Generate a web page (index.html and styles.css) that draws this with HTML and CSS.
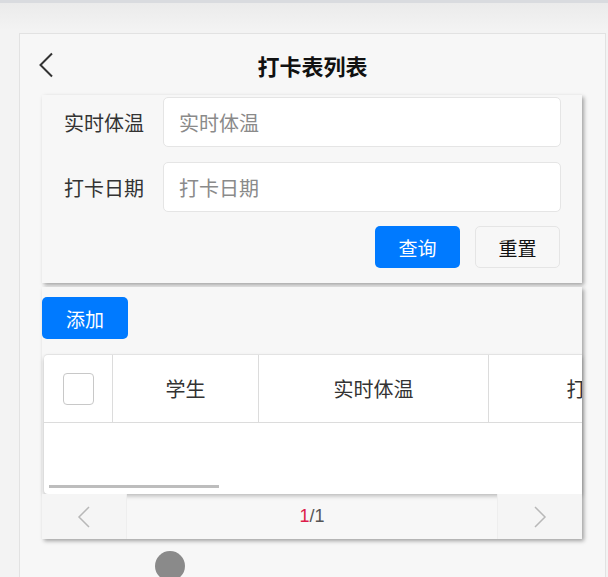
FILE: index.html
```html
<!DOCTYPE html>
<html lang="zh-CN">
<head>
  <meta charset="UTF-8">
  <meta name="viewport" content="width=device-width, initial-scale=1.0">
  <title>打卡表列表</title>
  <link rel="stylesheet" href="styles.css">
</head>
<body>
  <div class="topbar"></div>
  <div class="phone">
    <div class="navbar">
      <span class="back">
        <svg width="16" height="26" viewBox="0 0 16 26"><polyline points="14,1.5 2.5,13 14,24.5" fill="none" stroke="#333" stroke-width="2"/></svg>
      </span>
      <h1 class="title">打卡表列表</h1>
      <span></span>
    </div>

    <div class="content">
      <div class="search-card">
        <div class="form-row">
          <label class="form-label">实时体温</label>
          <input class="form-input" type="text" placeholder="实时体温">
        </div>
        <div class="form-row">
          <label class="form-label">打卡日期</label>
          <input class="form-input" type="text" placeholder="打卡日期">
        </div>
        <div class="form-actions">
          <button class="btn btn-primary">查询</button>
          <button class="btn btn-default">重置</button>
        </div>
      </div>

      <div class="list-card">
        <button class="btn btn-primary btn-add">添加</button>
        <div class="table-wrap">
          <div class="table">
            <div class="thead">
              <div class="th col-check"><span class="checkbox"></span></div>
              <div class="th col-student">学生</div>
              <div class="th col-temp">实时体温</div>
              <div class="th col-date">打卡日期</div>
            </div>
            <div class="tbody"></div>
          </div>
          <div class="scrollbar"></div>
        </div>
        <div class="pager">
          <div class="pager-btn">
            <svg width="14" height="22" viewBox="0 0 14 22"><polyline points="12,1 2,11 12,21" fill="none" stroke="#b8b8b8" stroke-width="1.5"/></svg>
          </div>
          <div class="pager-info"><span class="current">1</span>/1</div>
          <div class="pager-btn">
            <svg width="14" height="22" viewBox="0 0 14 22"><polyline points="2,1 12,11 2,21" fill="none" stroke="#b8b8b8" stroke-width="1.5"/></svg>
          </div>
        </div>
      </div>

      <div class="fab"></div>
    </div>
  </div>
</body>
</html>
```

FILE: styles.css
```css
* {
  box-sizing: border-box;
}
body {
  margin: 0;
  height: 577px;
  overflow: hidden;
  background: linear-gradient(#eaeaea, #f3f3f3 30px);
  font-family: "Noto Sans CJK SC", "Noto Sans", sans-serif;
  color: #333;
}
.topbar {
  height: 3px;
  background: #d9dbdf;
}
.phone {
  margin: 30px 0 0 19px;
  width: 587px;
  height: 544px;
  overflow: hidden;
  background: #f7f7f7;
  border: 1px solid #e2e2e2;
  border-bottom: none;
}
.navbar {
  height: 61px;
  display: grid;
  grid-template-columns: 1fr auto 1fr;
  align-items: center;
}
.back {
  padding-left: 18px;
  display: flex;
  align-items: center;
}
.title {
  margin: 0;
  font-size: 22px;
  font-weight: bold;
  color: #111;
}
.content {
  padding: 0 22px;
}
.search-card {
  width: 540px;
  padding: 2px 21px 15px 22px;
  background: #f7f7f7;
  box-shadow: 2px 2px 4px rgba(0, 0, 0, 0.35);
}
.form-row {
  display: flex;
  align-items: center;
  margin-bottom: 15px;
}
.form-label {
  width: 99px;
  font-size: 20px;
  color: #333;
}
.form-input {
  flex: 1;
  height: 50px;
  padding: 0 15px;
  border: 1px solid #e5e5e5;
  border-radius: 5px;
  background: #fff;
  font-family: inherit;
  font-size: 20px;
  color: #333;
}
.form-input::placeholder {
  color: #8a8a8a;
}
.form-actions {
  display: flex;
  justify-content: flex-end;
  gap: 15px;
  margin-top: -1px;
  padding-right: 1px;
}
.btn {
  width: 85px;
  height: 42px;
  border-radius: 5px;
  font-family: inherit;
  font-size: 19px;
  padding: 0;
}
.btn-primary {
  background: #007aff;
  border: none;
  color: #fff;
}
.btn-default {
  background: #f7f7f7;
  border: 1px solid #e5e5e5;
  color: #111;
}
.list-card {
  width: 540px;
  margin-top: 4px;
  padding-top: 10px;
  background: #f7f7f7;
  box-shadow: 2px 2px 4px rgba(0, 0, 0, 0.35);
}
.btn-add {
  width: 86px;
  display: block;
}
.table-wrap {
  margin: 16px 0 0 2px;
  width: 538px;
  height: 139px;
  overflow: hidden;
  background: #fff;
  border-radius: 4px 0 0 4px;
  box-shadow: 0 -1px 0 #e3e3e3, 0 2px 4px rgba(0, 0, 0, 0.25);
}
.table {
  width: 681px;
}
.thead {
  display: flex;
  height: 68px;
  border-bottom: 1px solid #dcdcdc;
}
.th {
  display: flex;
  align-items: center;
  justify-content: center;
  border-right: 1px solid #dcdcdc;
  font-size: 20px;
  color: #333;
}
.col-check {
  width: 69px;
}
.col-student {
  width: 146px;
}
.col-temp {
  width: 230px;
}
.col-date {
  width: 236px;
}
.checkbox {
  width: 31px;
  height: 32px;
  border: 1px solid #c8c8c8;
  border-radius: 4px;
  background: #fff;
}
.tbody {
  height: 62px;
}
.scrollbar {
  margin-left: 5px;
  width: 170px;
  height: 3px;
  background: #bdbdbd;
}
.pager {
  display: flex;
  height: 45px;
}
.pager-btn {
  position: relative;
  width: 85px;
  display: flex;
  align-items: center;
  justify-content: center;
  background: #f5f5f5;
}
.pager-btn:first-child {
  border-right: 1px solid #eee;
}
.pager-btn:last-child {
  border-left: 1px solid #eee;
}
.pager-info {
  flex: 1;
  text-align: center;
  line-height: 45px;
  font-family: "Liberation Sans", sans-serif;
  font-size: 18px;
  color: #555;
}
.current {
  color: #dd1c4a;
}
.fab {
  margin: 12px 0 0 113px;
  width: 30px;
  height: 30px;
  border-radius: 50%;
  background: #8a8a8a;
}
```
